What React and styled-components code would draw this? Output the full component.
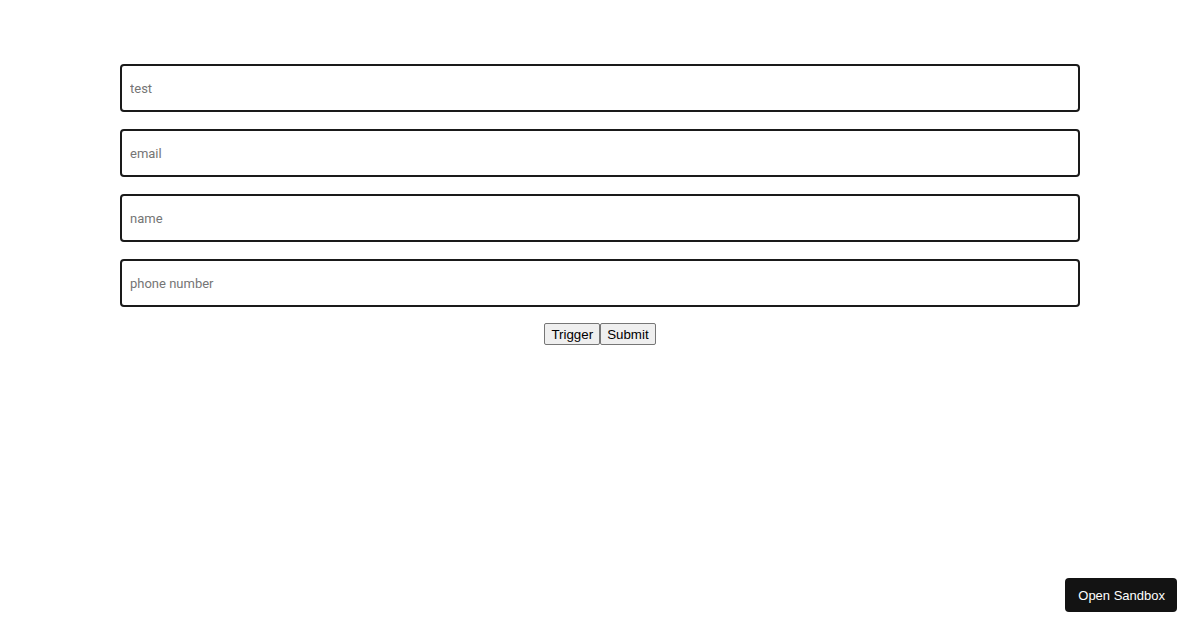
import React from "react";
import styled, { createGlobalStyle } from "styled-components";

const Global = createGlobalStyle`
  html, body { margin: 0; padding: 0; background: #fff; }
  body { font-family: "Liberation Sans", Arial, sans-serif; }
`;

const Page = styled.div`
  width: 1200px;
  height: 630px;
  position: relative;
  box-sizing: border-box;
  padding: 64px 120px 0;
`;

const Form = styled.form`
  display: flex;
  flex-direction: column;
  gap: 17px;
`;

const Input = styled.input`
  box-sizing: border-box;
  width: 100%;
  height: 48px;
  border: 2px solid #1a1a1a;
  border-radius: 4px;
  padding: 0 8px;
  font-family: Roboto, "Liberation Sans", Arial, sans-serif;
  font-size: 13px;
  color: #222;
  outline: none;
  &::placeholder { color: #757575; }
`;

const Actions = styled.div`
  display: flex;
  justify-content: center;
  margin-top: -1px;
`;

const Button = styled.button`
  font-family: "Liberation Sans", Arial, sans-serif;
  font-size: 13.33px;
  height: 22px;
  padding: 1px 6px;
  background: #efefef;
  border: 1px solid #767676;
  border-radius: 2px;
  color: #000;
`;

const Sandbox = styled.a`
  position: absolute;
  right: 23px;
  bottom: 18px;
  background: #131313;
  color: #fff;
  font-family: "Liberation Sans", Arial, sans-serif;
  font-size: 13px;
  height: 34px;
  padding: 0 12px 0 13px;
  display: flex;
  align-items: center;
  border-radius: 4px;
  text-decoration: none;
`;

export default function App() {
  return (
    <>
      <Global />
      <Page>
        <Form onSubmit={(e) => e.preventDefault()}>
          <Input placeholder="test" />
          <Input placeholder="email" />
          <Input placeholder="name" />
          <Input placeholder="phone number" />
          <Actions>
            <Button type="button">Trigger</Button>
            <Button type="submit">Submit</Button>
          </Actions>
        </Form>
        <Sandbox href="#">Open Sandbox</Sandbox>
      </Page>
    </>
  );
}
